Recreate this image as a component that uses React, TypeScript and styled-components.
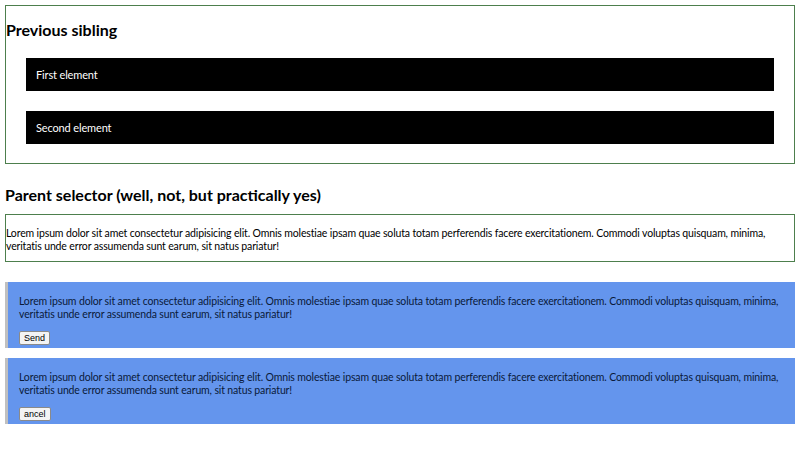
import styled, { createGlobalStyle } from 'styled-components';

const GlobalStyle = createGlobalStyle`
    html, body {
        margin: 0;
        padding: 0;
        background: #fff;
    }

    body {
        font-family: Lato, 'Noto Sans', sans-serif;
        font-size: 10.5px;
        letter-spacing: -0.14px;
        color: #000;
    }
`;

const Page = styled.div`
    padding: 5px;
    display: flex;
    flex-direction: column;
`;

const SiblingBox = styled.section`
    border: 1px solid #4d7f4d;
    padding: 0 20px 19px 0;
    display: flex;
    flex-direction: column;
    gap: 20px;
`;

const Heading = styled.h2`
    margin: 0;
    font-size: 16px;
    font-weight: 700;
    line-height: 20px;
    letter-spacing: 0;
`;

const BoxHeading = styled(Heading)`
    margin: 14px 0 -2px 0;
`;

const PageHeading = styled(Heading)`
    margin: 21px 0 9px 0;
`;

const Bar = styled.div`
    margin-left: 20px;
    background: #000;
    color: #fff;
    height: 33px;
    padding: 0 10px;
    display: flex;
    align-items: center;
    font-size: 11px;
`;

const TextBox = styled.div`
    border: 1px solid #4d7f4d;
    padding: 12px 0 9px 0;
    line-height: 12.5px;
`;

const Card = styled.div`
    margin-top: 20px;
    background: #6495ed;
    border-left: 3px solid #c0c0c0;
    padding: 13px 10px 3px 11px;
    line-height: 12.5px;
    color: #0a1a3a;

    & + & {
        margin-top: 10px;
    }
`;

const CardText = styled.p`
    margin: 0 0 11px 0;
`;

const Button = styled.button`
    font-family: 'Liberation Sans', Arial, sans-serif;
    font-size: 9px;
    line-height: 10px;
    letter-spacing: 0;
    padding: 1px 4px;
    background: #f4f4f4;
    border: 1px solid #8a8a8a;
    border-radius: 2px;
    color: #000;
`;

const LOREM =
    'Lorem ipsum dolor sit amet consectetur adipisicing elit. Omnis molestiae ipsam quae soluta totam perferendis facere exercitationem. Commodi voluptas quisquam, minima, veritatis unde error assumenda sunt earum, sit natus pariatur!';

const App = () => (
    <>
        <GlobalStyle />
        <Page>
            <SiblingBox>
                <BoxHeading>Previous sibling</BoxHeading>
                <Bar>First element</Bar>
                <Bar>Second element</Bar>
            </SiblingBox>
            <PageHeading>Parent selector (well, not, but practically yes)</PageHeading>
            <TextBox>{LOREM}</TextBox>
            <Card>
                <CardText>{LOREM}</CardText>
                <Button>Send</Button>
            </Card>
            <Card>
                <CardText>{LOREM}</CardText>
                <Button>ancel</Button>
            </Card>
        </Page>
    </>
);

export default App;
